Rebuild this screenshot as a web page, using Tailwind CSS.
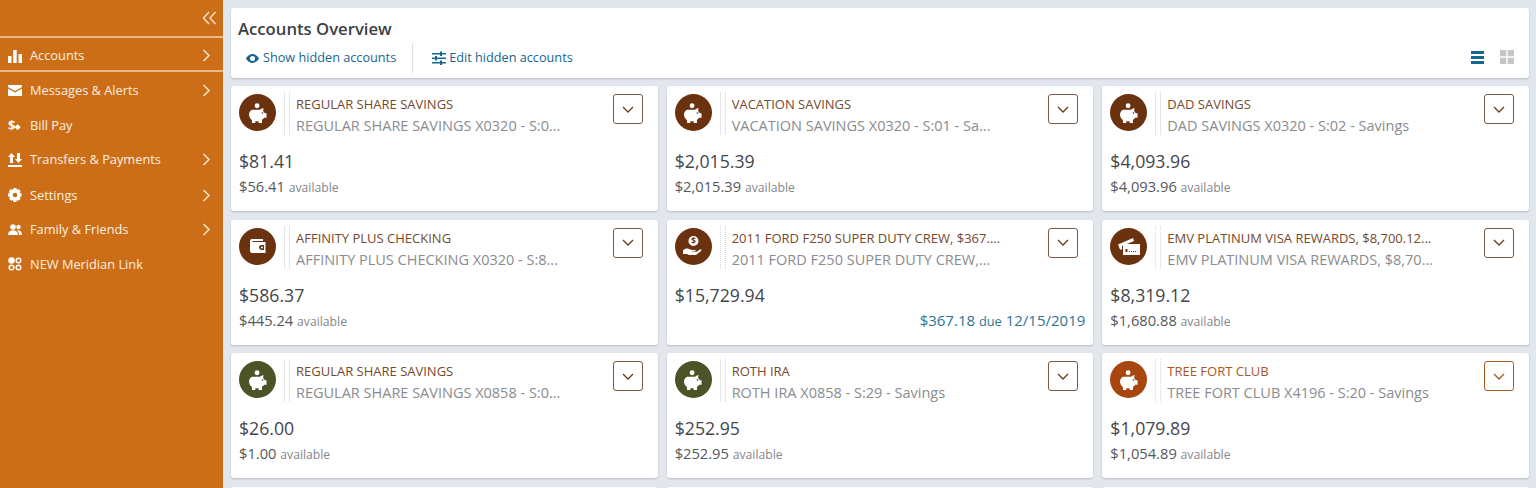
<!DOCTYPE html>
<html><head><meta charset="utf-8"><script src="https://cdn.jsdelivr.net/npm/@tailwindcss/browser@4"></script></head>
<body class="m-0 h-[488px] w-[1536px] overflow-hidden bg-[#e2e6ed] font-['Open_Sans','Noto_Sans',sans-serif]">
<svg width="0" height="0" class="absolute"><defs>
<symbol id="pig" viewBox="0 0 20 22"><circle cx="9" cy="3" r="2.700" fill="#fff"/><path fill="#fff" d="M3.500 7.500h8.700c.9-1 2.300-1.700 4-1.700l-.6 3c.9.700 1.500 1.500 1.900 2.400h2v5h-2.700c-.6.900-1.400 1.700-2.400 2.300V22h-3.700v-1.700H7V22H3.300v-3.100C1.200 17.400 0 15.200 0 12.500 0 10.500 1.300 8.500 3.500 7.500z"/><circle cx="15" cy="11" r="1" fill="#000" fill-opacity=".55"/></symbol>
</defs></svg>
<div class="flex h-[488px]">
<aside class="w-[223px] shrink-0 bg-[#cc6e17] text-[#fbeee0] text-[12.800px]">
 <div class="flex h-[36px] items-center justify-end pr-[6px]"><svg width="15" height="14" viewBox="0 0 15 14" fill="none" stroke="#fbe3cc" stroke-width="1.400"><path d="M7 1 1.500 7 7 13M13.500 1 8 7l5.500 6"/></svg></div>
 <div class="flex h-[36px] items-center border-y-2 border-[#e8b98b] pl-[8px] pr-[12px] pt-[3px]">
  <svg class="w-[14px] h-[14px]" viewBox="0 0 14 14" fill="#fff"><path d="M0 7h3.500v7H0zM5.200 1h3.500v13H5.200zM10.500 5H14v9h-3.500z"/></svg>
  <span class="ml-[8px] flex-1">Accounts</span><svg width="9" height="13" viewBox="0 0 9 13" fill="none" stroke="#fbe3cc" stroke-width="1.500"><path d="m1.500 1 5.500 5.500L1.500 12"/></svg></div>
 <nav class="pt-[1px]">
 <div class="flex h-[34.800px] items-center pl-[8px] pr-[12px]">
  <svg class="w-[14px] h-[11px]" viewBox="0 0 14 11" fill="#fff"><path d="M0 0h14v2L7 6 0 2zM0 3.600l7 4 7-4V11H0z"/></svg>
  <span class="ml-[8px] flex-1">Messages &amp; Alerts</span><svg width="9" height="13" viewBox="0 0 9 13" fill="none" stroke="#fbe3cc" stroke-width="1.500"><path d="m1.500 1 5.500 5.500L1.500 12"/></svg></div>
 <div class="flex h-[34.800px] items-center pl-[8px] pr-[12px]">
  <span class="w-[14px] text-[13px] font-bold leading-none text-white whitespace-nowrap">$<span class="text-[7px] align-[1px]">◆</span></span>
  <span class="ml-[8px] flex-1">Bill Pay</span></div>
 <div class="flex h-[34.800px] items-center pl-[8px] pr-[12px]">
  <svg class="w-[14px] h-[14px]" viewBox="0 0 14 14" fill="#fff"><path d="M3.500 0 7 4H5v6H2V4H0zM10.500 10 7 6h2V0h3v6h2zM0 12h14v2H0z"/></svg>
  <span class="ml-[8px] flex-1">Transfers &amp; Payments</span><svg width="9" height="13" viewBox="0 0 9 13" fill="none" stroke="#fbe3cc" stroke-width="1.500"><path d="m1.500 1 5.500 5.500L1.500 12"/></svg></div>
 <div class="flex h-[34.800px] items-center pl-[8px] pr-[12px] pt-[1px]">
  <svg class="w-[14px] h-[14px]" viewBox="0 0 14 14" fill="#fff"><path fill-rule="evenodd" d="M5.500 0h3l.4 2 1.700-.9 2.100 2.100-1 1.700 1.800.6v3l-1.800.5.9 1.700-2.100 2.100-1.700-.9-.3 2.100h-3l-.5-2.100-1.700.9-2.100-2.100.9-1.700L0 8.500v-3l1.800-.6-.9-1.700 2.100-2.100 1.700.9zM7 4.700a2.300 2.300 0 1 0 0 4.600 2.300 2.300 0 0 0 0-4.600z"/></svg>
  <span class="ml-[8px] flex-1">Settings</span><svg width="9" height="13" viewBox="0 0 9 13" fill="none" stroke="#fbe3cc" stroke-width="1.500"><path d="m1.500 1 5.500 5.500L1.500 12"/></svg></div>
 <div class="flex h-[34.800px] items-center pl-[8px] pr-[12px]">
  <svg class="w-[14px] h-[11px]" viewBox="0 0 14 11" fill="#fff"><circle cx="5" cy="3" r="2.800"/><circle cx="10.500" cy="3" r="2.200"/><path d="M0 11c0-3 2-4.800 5-4.800S10 8 10 11zM11 11c0-2-.5-3.500-1.700-4.600 2.600-.4 4.700 1.400 4.700 4.600z"/></svg>
  <span class="ml-[8px] flex-1">Family &amp; Friends</span><svg width="9" height="13" viewBox="0 0 9 13" fill="none" stroke="#fbe3cc" stroke-width="1.500"><path d="m1.500 1 5.500 5.500L1.500 12"/></svg></div>
 <div class="flex h-[34.800px] items-center pl-[8px] pr-[12px]">
  <svg class="w-[14px] h-[14px]" viewBox="0 0 14 14" fill="none" stroke="#fff" stroke-width="1.500"><circle cx="3.500" cy="3.500" r="2.500" fill="#fff"/><circle cx="10.500" cy="3.500" r="2.300"/><circle cx="3.500" cy="10.500" r="2.300"/><circle cx="10.500" cy="10.500" r="2.300"/></svg>
  <span class="ml-[8px] flex-1">NEW Meridian Link</span></div>
 </nav>
</aside>
<main class="flex-1 pl-[8px] pr-[7px] pt-[8px]">
 <header class="relative h-[70px] rounded-[3px] bg-white px-[7px] pt-[10px] shadow-[0_1px_2px_rgba(0,0,0,0.18)]">
  <h1 class="text-[16.700px] font-semibold leading-[22px] text-[#3c3f44]">Accounts Overview</h1>
  <div class="mt-[3px] flex h-[30px] items-center text-[12.700px] text-[#17668f]">
   <svg class="ml-[8px] mr-[4px] w-[13px] h-[9px]" viewBox="0 0 13 9" fill="#17668f"><path fill-rule="evenodd" d="M6.500 0C9.500 0 12 2.500 13 4.500 12 6.500 9.500 9 6.500 9S1 6.500 0 4.500C1 2.500 3.500 0 6.500 0zm0 2a2.500 2.500 0 1 0 0 5 2.500 2.500 0 0 0 0-5z"/></svg>
   <span>Show hidden accounts</span>
   <span class="ml-[16px] mr-[19px] h-[30px] w-px bg-[#dcdfe3]"></span>
   <svg class="mr-[3px] w-[14px] h-[14px]" viewBox="0 0 14 14" fill="#17668f"><path d="M0 2h14v1.500H0zM0 6.500h14V8H0zM0 11h14v1.500H0z"/><path d="M8 .5h2v4.500H8zM3 5h2v4.500H3zM8 9.500h2V14H8z"/></svg>
   <span>Edit hidden accounts</span>
  </div>
  <div class="absolute right-[15px] bottom-[14px] flex items-center gap-[16px]">
   <svg class="w-[13px] h-[13px]" viewBox="0 0 13 13" fill="#17668f"><path d="M0 0h13v3H0zM0 5h13v3H0zM0 10h13v3H0z"/></svg>
   <svg class="w-[14px] h-[14px]" viewBox="0 0 14 14" fill="#c6c6c6"><path d="M0 0h6.300v6.300H0zM7.700 0H14v6.300H7.700zM0 7.700h6.300V14H0zM7.700 7.700H14V14H7.700z"/></svg>
  </div>
 </header>
 <section class="mt-[8px] grid grid-cols-3 gap-x-[9px] gap-y-[8.500px]">

  <article class="relative h-[125px] rounded-[3px] bg-white px-[8px] pt-[8px] shadow-[0_1px_2px_rgba(0,0,0,0.18)]">
   <div class="flex"><div class="flex h-[37px] w-[37px] shrink-0 items-center justify-center rounded-full bg-[#6b3210]"><svg class="h-[20px] w-[18px]"><use href="#pig"/></svg></div>
    <div class="ml-[8px] mr-[6px] -mt-[2px] h-[43px] w-[6px] shrink-0 border-x border-[#e3e5e8]"></div>
    <div class="min-w-0"><div class="text-[13px] leading-[21px] text-[#74492c]">REGULAR SHARE SAVINGS</div><div class="text-[14.500px] leading-[22px] text-[#8a8c8f]">REGULAR SHARE SAVINGS X0320 - S:0...</div></div></div>
   <div class="absolute right-[15px] top-[8px] flex h-[30px] w-[30px] items-center justify-center rounded-[3px] border border-[#7b5a41]"><svg width="12" height="7" viewBox="0 0 12 7" fill="none" stroke="#6b3a1c" stroke-width="1.300"><path d="m1 1 5 5 5-5"/></svg></div>
   <div class="mt-[11px] text-[17.700px] leading-[26px] text-[#44474b]">$81.41</div>
   <div class="text-[14.700px] leading-[24px] text-[#55585c]">$56.41 <span class="text-[12.200px] text-[#85888c]">available</span></div>
  </article>

  <article class="relative h-[125px] rounded-[3px] bg-white px-[8px] pt-[8px] shadow-[0_1px_2px_rgba(0,0,0,0.18)]">
   <div class="flex"><div class="flex h-[37px] w-[37px] shrink-0 items-center justify-center rounded-full bg-[#6b3210]"><svg class="h-[20px] w-[18px]"><use href="#pig"/></svg></div>
    <div class="ml-[8px] mr-[6px] -mt-[2px] h-[43px] w-[6px] shrink-0 border-x border-[#e3e5e8]"></div>
    <div class="min-w-0"><div class="text-[13px] leading-[21px] text-[#74492c]">VACATION SAVINGS</div><div class="text-[14.500px] leading-[22px] text-[#8a8c8f]">VACATION SAVINGS X0320 - S:01 - Sa...</div></div></div>
   <div class="absolute right-[15px] top-[8px] flex h-[30px] w-[30px] items-center justify-center rounded-[3px] border border-[#7b5a41]"><svg width="12" height="7" viewBox="0 0 12 7" fill="none" stroke="#6b3a1c" stroke-width="1.300"><path d="m1 1 5 5 5-5"/></svg></div>
   <div class="mt-[11px] text-[17.700px] leading-[26px] text-[#44474b]">$2,015.39</div>
   <div class="text-[14.700px] leading-[24px] text-[#55585c]">$2,015.39 <span class="text-[12.200px] text-[#85888c]">available</span></div>
  </article>

  <article class="relative h-[125px] rounded-[3px] bg-white px-[8px] pt-[8px] shadow-[0_1px_2px_rgba(0,0,0,0.18)]">
   <div class="flex"><div class="flex h-[37px] w-[37px] shrink-0 items-center justify-center rounded-full bg-[#6b3210]"><svg class="h-[20px] w-[18px]"><use href="#pig"/></svg></div>
    <div class="ml-[8px] mr-[6px] -mt-[2px] h-[43px] w-[6px] shrink-0 border-x border-[#e3e5e8]"></div>
    <div class="min-w-0"><div class="text-[13px] leading-[21px] text-[#74492c]">DAD SAVINGS</div><div class="text-[14.500px] leading-[22px] text-[#8a8c8f]">DAD SAVINGS X0320 - S:02 - Savings</div></div></div>
   <div class="absolute right-[15px] top-[8px] flex h-[30px] w-[30px] items-center justify-center rounded-[3px] border border-[#7b5a41]"><svg width="12" height="7" viewBox="0 0 12 7" fill="none" stroke="#6b3a1c" stroke-width="1.300"><path d="m1 1 5 5 5-5"/></svg></div>
   <div class="mt-[11px] text-[17.700px] leading-[26px] text-[#44474b]">$4,093.96</div>
   <div class="text-[14.700px] leading-[24px] text-[#55585c]">$4,093.96 <span class="text-[12.200px] text-[#85888c]">available</span></div>
  </article>

  <article class="relative h-[125px] rounded-[3px] bg-white px-[8px] pt-[8px] shadow-[0_1px_2px_rgba(0,0,0,0.18)]">
   <div class="flex"><div class="flex h-[37px] w-[37px] shrink-0 items-center justify-center rounded-full bg-[#6b3210]"><svg class="h-[20px] w-[20px]" viewBox="0 0 20 20" fill="#fff"><path fill-rule="evenodd" d="M4 3h11v2H4.500v1H17.500v11H4a2 2 0 0 1-2-2V5a2 2 0 0 1 2-2zm9.500 6a2.500 2.500 0 0 0 0 5H16V9zm.5 1.500a1 1 0 1 1 0 2 1 1 0 0 1 0-2z"/></svg></div>
    <div class="ml-[8px] mr-[6px] -mt-[2px] h-[43px] w-[6px] shrink-0 border-x border-[#e3e5e8]"></div>
    <div class="min-w-0"><div class="text-[13px] leading-[21px] text-[#74492c]">AFFINITY PLUS CHECKING</div><div class="text-[14.500px] leading-[22px] text-[#8a8c8f]">AFFINITY PLUS CHECKING X0320 - S:8...</div></div></div>
   <div class="absolute right-[15px] top-[8px] flex h-[30px] w-[30px] items-center justify-center rounded-[3px] border border-[#7b5a41]"><svg width="12" height="7" viewBox="0 0 12 7" fill="none" stroke="#6b3a1c" stroke-width="1.300"><path d="m1 1 5 5 5-5"/></svg></div>
   <div class="mt-[11px] text-[17.700px] leading-[26px] text-[#44474b]">$586.37</div>
   <div class="text-[14.700px] leading-[24px] text-[#55585c]">$445.24 <span class="text-[12.200px] text-[#85888c]">available</span></div>
  </article>

  <article class="relative h-[125px] rounded-[3px] bg-white px-[8px] pt-[8px] shadow-[0_1px_2px_rgba(0,0,0,0.18)]">
   <div class="flex"><div class="flex h-[37px] w-[37px] shrink-0 items-center justify-center rounded-full bg-[#6b3210]"><svg class="h-[22px] w-[22px]" viewBox="0 0 22 22"><circle cx="11.500" cy="6" r="5" fill="#fff"/><text x="11.500" y="9" text-anchor="middle" font-size="8" font-weight="700" fill="#6b3210">$</text><path fill="#fff" d="M1 15.500c2-2 4-2.500 6-1.500l3 1h3c1 0 1 1.500 0 1.500h-3v.5h4l4-2.500c1-.5 2 .5 1 1.500l-5 4H7l-2-1H1z"/></svg></div>
    <div class="ml-[8px] mr-[6px] -mt-[2px] h-[43px] w-[6px] shrink-0 border-x border-dotted border-[#d5d8dc]"></div>
    <div class="min-w-0"><div class="text-[13px] leading-[21px] text-[#74492c] whitespace-nowrap">2011 FORD F250 SUPER DUTY CREW, $367....</div><div class="text-[14.500px] leading-[22px] text-[#8a8c8f] whitespace-nowrap">2011 FORD F250 SUPER DUTY CREW,...</div></div></div>
   <div class="absolute right-[15px] top-[8px] flex h-[30px] w-[30px] items-center justify-center rounded-[3px] border border-[#7b5a41]"><svg width="12" height="7" viewBox="0 0 12 7" fill="none" stroke="#6b3a1c" stroke-width="1.300"><path d="m1 1 5 5 5-5"/></svg></div>
   <div class="mt-[11px] text-[17.700px] leading-[26px] text-[#44474b]">$15,729.94</div>
   <div class="text-right text-[15px] leading-[24px] text-[#2e7491]">$367.18 <span class="text-[12.800px]">due</span> 12/15/2019</div>
  </article>

  <article class="relative h-[125px] rounded-[3px] bg-white px-[8px] pt-[8px] shadow-[0_1px_2px_rgba(0,0,0,0.18)]">
   <div class="flex"><div class="flex h-[37px] w-[37px] shrink-0 items-center justify-center rounded-full bg-[#6b3210]"><svg class="h-[26px] w-[26px]" viewBox="0 0 26 26" fill="#fff"><path d="M2 11.500 17 5l1 3L6 13v3.500H4z"/><path fill-rule="evenodd" d="M7 11h17v11H7zm2.500 5v3h2v-3zm3.500 2v1h1v-1zm2 0v1h1v-1zm2 0v1h1v-1zm2 0v1h1v-1z"/></svg></div>
    <div class="ml-[8px] mr-[6px] -mt-[2px] h-[43px] w-[6px] shrink-0 border-x border-dotted border-[#d5d8dc]"></div>
    <div class="min-w-0"><div class="text-[13px] leading-[21px] text-[#74492c] whitespace-nowrap">EMV PLATINUM VISA REWARDS, $8,700.12...</div><div class="text-[14.500px] leading-[22px] text-[#8a8c8f] whitespace-nowrap">EMV PLATINUM VISA REWARDS, $8,70...</div></div></div>
   <div class="absolute right-[15px] top-[8px] flex h-[30px] w-[30px] items-center justify-center rounded-[3px] border border-[#7b5a41]"><svg width="12" height="7" viewBox="0 0 12 7" fill="none" stroke="#6b3a1c" stroke-width="1.300"><path d="m1 1 5 5 5-5"/></svg></div>
   <div class="mt-[11px] text-[17.700px] leading-[26px] text-[#44474b]">$8,319.12</div>
   <div class="text-[14.700px] leading-[24px] text-[#55585c]">$1,680.88 <span class="text-[12.200px] text-[#85888c]">available</span></div>
  </article>

  <article class="relative h-[125px] rounded-[3px] bg-white px-[8px] pt-[8px] shadow-[0_1px_2px_rgba(0,0,0,0.18)]">
   <div class="flex"><div class="flex h-[37px] w-[37px] shrink-0 items-center justify-center rounded-full bg-[#4d5327]"><svg class="h-[20px] w-[18px]"><use href="#pig"/></svg></div>
    <div class="ml-[8px] mr-[6px] -mt-[2px] h-[43px] w-[6px] shrink-0 border-x border-[#e3e5e8]"></div>
    <div class="min-w-0"><div class="text-[13px] leading-[21px] text-[#74492c]">REGULAR SHARE SAVINGS</div><div class="text-[14.500px] leading-[22px] text-[#8a8c8f]">REGULAR SHARE SAVINGS X0858 - S:0...</div></div></div>
   <div class="absolute right-[15px] top-[8px] flex h-[30px] w-[30px] items-center justify-center rounded-[3px] border border-[#7b5a41]"><svg width="12" height="7" viewBox="0 0 12 7" fill="none" stroke="#6b3a1c" stroke-width="1.300"><path d="m1 1 5 5 5-5"/></svg></div>
   <div class="mt-[11px] text-[17.700px] leading-[26px] text-[#44474b]">$26.00</div>
   <div class="text-[14.700px] leading-[24px] text-[#55585c]">$1.00 <span class="text-[12.200px] text-[#85888c]">available</span></div>
  </article>

  <article class="relative h-[125px] rounded-[3px] bg-white px-[8px] pt-[8px] shadow-[0_1px_2px_rgba(0,0,0,0.18)]">
   <div class="flex"><div class="flex h-[37px] w-[37px] shrink-0 items-center justify-center rounded-full bg-[#4d5327]"><svg class="h-[20px] w-[18px]"><use href="#pig"/></svg></div>
    <div class="ml-[8px] mr-[6px] -mt-[2px] h-[43px] w-[6px] shrink-0 border-x border-[#e3e5e8]"></div>
    <div class="min-w-0"><div class="text-[13px] leading-[21px] text-[#74492c]">ROTH IRA</div><div class="text-[14.500px] leading-[22px] text-[#8a8c8f]">ROTH IRA X0858 - S:29 - Savings</div></div></div>
   <div class="absolute right-[15px] top-[8px] flex h-[30px] w-[30px] items-center justify-center rounded-[3px] border border-[#7b5a41]"><svg width="12" height="7" viewBox="0 0 12 7" fill="none" stroke="#6b3a1c" stroke-width="1.300"><path d="m1 1 5 5 5-5"/></svg></div>
   <div class="mt-[11px] text-[17.700px] leading-[26px] text-[#44474b]">$252.95</div>
   <div class="text-[14.700px] leading-[24px] text-[#55585c]">$252.95 <span class="text-[12.200px] text-[#85888c]">available</span></div>
  </article>

  <article class="relative h-[125px] rounded-[3px] bg-white px-[8px] pt-[8px] shadow-[0_1px_2px_rgba(0,0,0,0.18)]">
   <div class="flex"><div class="flex h-[37px] w-[37px] shrink-0 items-center justify-center rounded-full bg-[#a8460f]"><svg class="h-[20px] w-[18px]"><use href="#pig"/></svg></div>
    <div class="ml-[8px] mr-[6px] -mt-[2px] h-[43px] w-[6px] shrink-0 border-x border-dotted border-[#d5d8dc]"></div>
    <div class="min-w-0"><div class="text-[13px] leading-[21px] text-[#a8591f]">TREE FORT CLUB</div><div class="text-[14.500px] leading-[22px] text-[#8a8c8f]">TREE FORT CLUB X4196 - S:20 - Savings</div></div></div>
   <div class="absolute right-[15px] top-[8px] flex h-[30px] w-[30px] items-center justify-center rounded-[3px] border border-[#a8591f]"><svg width="12" height="7" viewBox="0 0 12 7" fill="none" stroke="#a8591f" stroke-width="1.300"><path d="m1 1 5 5 5-5"/></svg></div>
   <div class="mt-[11px] text-[17.700px] leading-[26px] text-[#44474b]">$1,079.89</div>
   <div class="text-[14.700px] leading-[24px] text-[#55585c]">$1,054.89 <span class="text-[12.200px] text-[#85888c]">available</span></div>
  </article>

  <article class="h-[125px] rounded-[3px] bg-white shadow-[0_1px_2px_rgba(0,0,0,0.18)]"></article>
  <article class="h-[125px] rounded-[3px] bg-white shadow-[0_1px_2px_rgba(0,0,0,0.18)]"></article>
  <article class="h-[125px] rounded-[3px] bg-white shadow-[0_1px_2px_rgba(0,0,0,0.18)]"></article>
 </section>
</main>
</div>
</body></html>
